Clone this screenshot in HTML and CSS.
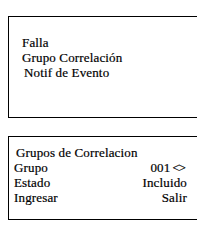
FILE: index.html
```html
<!DOCTYPE html>
<html lang="es">
<head>
<meta charset="utf-8">
<link rel="stylesheet" href="styles.css">
</head>
<body>
<div class="screen menu">
  <div class="line">Falla</div>
  <div class="line">Grupo Correlación</div>
  <div class="line indent">Notif de Evento</div>
</div>
<div class="screen groups">
  <div class="line title">Grupos de Correlacion</div>
  <div class="row"><span>Grupo</span><span class="val">001<span class="arrows"><span class="lt">&lt;</span>&gt;</span></span></div>
  <div class="row"><span>Estado</span><span>Incluido</span></div>
  <div class="row"><span>Ingresar</span><span>Salir</span></div>
</div>
</body>
</html>
```
FILE: styles.css
```css
html, body {
  background: #ffffff;
}
body {
  margin: 8px;
  padding-top: 8px;
  font-family: "Liberation Serif", "Times New Roman", serif;
  font-size: 13px;
  line-height: 15px;
  color: #000000;
  letter-spacing: 0.15px;
  -webkit-text-stroke: 0.2px #000000;
}
.screen {
  border: 1px solid #000000;
}
.menu {
  width: 190px;
  height: 102px;
  padding: 18px 0 0 13px;
  box-sizing: border-box;
}
.groups {
  margin-top: 18px;
  width: 173px;
  padding: 8px 11px 14px 5px;
}
.indent {
  padding-left: 2px;
}
.title {
  padding-left: 2px;
}
.row {
  display: flex;
  justify-content: space-between;
}
.arrows {
  margin-left: 2px;
  margin-right: 1px;
}
.lt {
  letter-spacing: -1.2px;
}
```
